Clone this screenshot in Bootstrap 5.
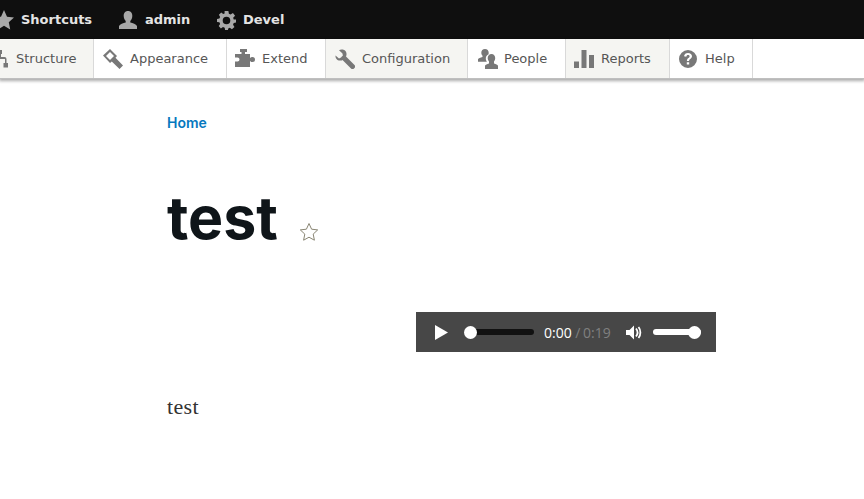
<!DOCTYPE html>
<html lang="en">
<head>
<meta charset="utf-8">
<title>test</title>
<link href="https://cdn.jsdelivr.net/npm/bootstrap@5.3.0/dist/css/bootstrap.min.css" rel="stylesheet">
<style>
html,body{background:#fff;overflow:hidden}
body{width:864px;height:499px;font-family:"DejaVu Sans",sans-serif}
.topbar{height:39px;background:#0f0f0f;margin-left:-6px;padding-top:1px}
.topitem{color:#e4e4e4;font-weight:700;font-size:13px;text-decoration:none;line-height:38px}
.topitem svg{fill:#a8a8a8;display:block}
.i1{width:124px;gap:7px}
.i2{width:99px;gap:7px}
.i3{gap:7px}
.adminnav{height:40px;background:#fff;border-bottom:1px solid #bfbfbf;box-shadow:0 1px 3px 1px rgba(0,0,0,.33);position:relative;margin:0;padding:0;list-style:none}
.navcell{height:39px;border-right:1px solid #d9d9d9;color:#565656;font-size:13px;text-decoration:none;flex:none}
.navcell svg{fill:#787878;flex:none;display:block}
.shade{background:#f5f5f2}
.c0{padding-left:0;gap:8px;margin-left:-13px;width:107px}
.c1{width:133px;padding-left:9px;gap:7px}
.c2{width:99px;padding-left:8px;gap:7px}
.c3{width:142px;padding-left:9px;gap:7px}
.c4{width:98px;padding-left:10px;gap:6px}
.c5{width:104px;padding-left:8px;gap:7px}
.c6{width:83px;padding-left:9px;gap:8px}
.pagebody{padding-left:167px}
.crumb{font-family:Inter,sans-serif;font-weight:600;font-size:14px;line-height:20px;color:#0678be;text-decoration:none;display:block;margin-top:34px}
.headline{font-family:Inter,sans-serif;font-weight:700;font-size:59px;line-height:72px;color:#0f1519;margin:49px 0 0;gap:21px}
.headline svg{margin-top:27px}
.player{width:300px;height:40px;background:#474747;margin:58px 0 0 249px;font-family:"Open Sans",sans-serif;font-size:14px}
.pl-play{margin-left:19px;fill:#fff;flex:none}
.track{height:6px;border-radius:3px;position:relative;flex:none}
.seek{width:69px;margin-left:17px;background:#111}
.vol{width:48px;margin-left:11px;background:#fff}
.knob{width:13px;height:13px;background:#fff;border-radius:50%;position:absolute;top:-3.5px}
.seek .knob{left:-1px}
.vol .knob{right:0}
.time{color:#fff;margin-left:10px;white-space:nowrap}
.time span{color:#808080;word-spacing:-1px}
.spk{margin-left:15px;fill:#fff;flex:none}
.para{font-family:"Liberation Serif",serif;font-size:22px;letter-spacing:.35px;line-height:24px;color:#333;margin:43px 0 0}
</style>
</head>
<body>
<nav class="topbar d-flex align-items-center">
  <a class="topitem i1 d-flex align-items-center" href="#"><svg width="20" height="20" viewBox="0 0 18 18"><path d="M9 0l2.700 6 6.300.7-4.700 4.300 1.300 6.500L9 14.200l-5.600 3.300L4.700 11 0 6.700 6.300 6z"/></svg>Shortcuts</a>
  <a class="topitem i2 d-flex align-items-center" href="#"><svg width="20" height="20" viewBox="0 0 20 20"><path d="M10 1c3 0 4.300 2.300 4.300 5 0 2.300-1 4-2 5v1.500c2.500.6 5.700 1.800 6.700 3.500v3H1v-3c1-1.700 4.200-2.900 6.700-3.500V11c-1-1-2-2.700-2-5 0-2.700 1.300-5 4.300-5z"/></svg>admin</a>
  <a class="topitem i3 d-flex align-items-center" href="#"><svg width="19" height="19" viewBox="0 0 20 20"><path fill-rule="evenodd" d="M8 0h4l.5 3 1.800.8L16.800 2 19 5l-2 2.200.6 1.800H20v3l-2.400.6-.7 1.800 1.500 2.400-2.700 2.400-2.200-1.500-1.700.7L11.500 20h-3l-.4-2.500-1.800-.7-2.200 1.500-2.300-2.400 1.500-2.300-.8-1.800L0 11.500v-3l2.500-.5.800-1.800L2 4l2.500-2.300 2 1.400L8 2.500zM10 6a4 4 0 1 0 0 8 4 4 0 0 0 0-8z"/></svg>Devel</a>
</nav>
<ul class="adminnav d-flex">
  <li><a class="navcell c0 shade d-flex align-items-center" href="#"><svg width="21" height="20" viewBox="0 0 21 20"><path d="M9 1h6v4h-1v3h3.500a2 2 0 0 1 2 2v4h1.500v4.500h-4.500V14H18v-4H9v4h1.500v4.500H6V14h1.500v-4a2 2 0 0 1 2-2H13V5H9z"/></svg>Structure</a></li>
  <li><a class="navcell c1 d-flex align-items-center" href="#"><svg width="20" height="20" viewBox="0 0 20 20"><path fill-rule="evenodd" d="M7 0L0 6.500 7 14l1.800-1.500L16.500 20 20 16.500l-7.500-7.700L14 7zM7 3l4 4-4 4-4-4z"/></svg>Appearance</a></li>
  <li><a class="navcell c2 d-flex align-items-center" href="#"><svg width="20" height="20" viewBox="0 0 20 20"><path d="M5 0h7v3h-2v2h5v4c1-1 1.500-1 2.500-1a2.500 2.500 0 0 1 0 5c-1 0-1.500 0-2.500-1v6H0v-5.500h2.500a2 2 0 0 0 0-4H0V5h6.500V3H5z"/></svg>Extend</a></li>
  <li><a class="navcell c3 shade d-flex align-items-center" href="#"><svg width="20" height="20" viewBox="0 0 20 20"><path d="M6.500.5c3-.3 5.500 2 5 5.300-.1.700-.3 1.300-.6 1.800l-3.300 3.300c-.5.300-1.100.5-1.800.6C2.500 12 .2 9.500.5 6.500L4 9.500 8 7.500 7.500 4.500 4 1.200c.8-.4 1.600-.6 2.500-.7z"/><path d="M9 9l8.500 8.500" stroke="#787878" stroke-width="5" stroke-linecap="round" fill="none"/></svg>Configuration</a></li>
  <li><a class="navcell c4 d-flex align-items-center" href="#"><svg width="20" height="20" viewBox="0 0 20 20"><path d="M7 0c2.300 0 3.700 1.700 3.700 3.800 0 .7-.1 1.200-.3 1.700-1.500.5-2.600 1.900-2.600 3.900 0 1.300.5 2.500 1.200 3.300H0v-2.500c.5-1 2.300-1.800 4.500-2.300V6.800C3.800 6 3.300 5 3.300 3.800 3.300 1.700 4.700 0 7 0z"/><path d="M13.500 5c2.300 0 3.700 1.800 3.700 4.100 0 1.400-.5 2.700-1.200 3.500v1.900c2 .5 3.500 1.200 4 2.200V20H7v-3.300c.5-1 2-1.700 4-2.200v-1.900c-.7-.8-1.300-2.100-1.300-3.500C9.700 6.800 11.200 5 13.500 5z"/></svg>People</a></li>
  <li><a class="navcell c5 shade d-flex align-items-center" href="#"><svg width="20" height="20" viewBox="0 0 20 20"><path d="M0 12.500h5V19H0zM7.500 1h5v18h-5zM15 6h5v13h-5z"/></svg>Reports</a></li>
  <li><a class="navcell c6 d-flex align-items-center" href="#"><svg width="18" height="18" viewBox="0 0 18 18"><path fill-rule="evenodd" d="M9 0a9 9 0 1 1 0 18A9 9 0 0 1 9 0zM9 3C6.800 3 5.300 4.200 5 6.300l2.300.4C7.500 5.700 8 5.100 9 5.100c.9 0 1.600.5 1.600 1.300 0 .7-.4 1-1.200 1.600C8.400 8.700 7.900 9.400 7.900 11h2.200c0-1 .3-1.300 1.100-1.900C12.200 8.300 13 7.600 13 6.300 13 4.300 11.300 3 9 3zM7.800 12.200v2.400h2.400v-2.400z"/></svg>Help</a></li>
</ul>
<main class="pagebody">
  <a class="crumb" href="#">Home</a>
  <h1 class="headline d-flex align-items-center">test<svg width="20" height="20" viewBox="0 0 20 20"><path fill="#fff" stroke="#8a8674" d="M10 1.500l2.600 5.700 6.100.7-4.500 4.200 1.200 6.100-5.400-3-5.400 3 1.200-6.100L1.300 7.900l6.100-.7z"/></svg></h1>
  <div class="player d-flex align-items-center">
    <svg class="pl-play" width="13" height="15" viewBox="0 0 13 15"><path d="M0 0l13 7.500L0 15z"/></svg>
    <div class="track seek"><span class="knob"></span></div>
    <div class="time">0:00 <span>/ 0:19</span></div>
    <svg class="spk" width="16" height="15" viewBox="0 0 16 15"><path d="M0 5h3.500L8 .5v14L3.500 10H0z"/><path fill="none" stroke="#fff" stroke-width="1.800" d="M10 3.500c1.800 2.300 1.800 5.700 0 8M12.500 2c2.500 3 2.500 8 0 11"/></svg>
    <div class="track vol"><span class="knob"></span></div>
  </div>
  <p class="para">test</p>
</main>
<script src="https://cdn.jsdelivr.net/npm/bootstrap@5.3.0/dist/js/bootstrap.bundle.min.js"></script>
</body>
</html>
